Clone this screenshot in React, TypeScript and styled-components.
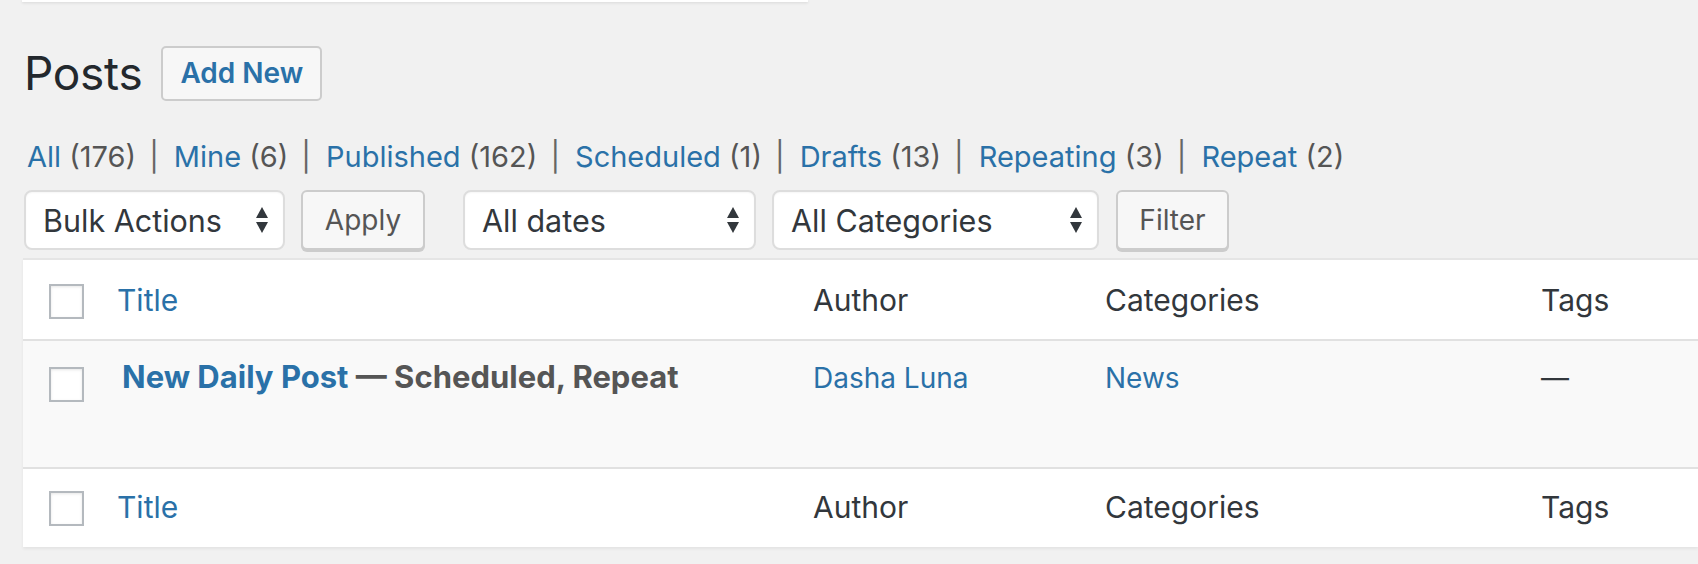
import React from 'react';
import styled, {createGlobalStyle} from 'styled-components';

const GlobalStyle = createGlobalStyle`
    html, body {
        margin: 0;
        padding: 0;
        background: #f1f1f1;
        overflow: hidden;
    }
    body {
        font-family: Inter, "Noto Sans", sans-serif;
        color: #444;
    }
`;

const LINK = '#2a71a8';

const Page = styled.div`
    padding-left: 22px;
    height: 564px;
`;

const TopStrip = styled.div`
    width: 786px;
    height: 2px;
    background: #fff;
    box-shadow: 0 1px 3px rgba(0, 0, 0, 0.12);
`;

const Heading = styled.div`
    display: flex;
    align-items: center;
    gap: 19px;
    margin-top: 42px;
    padding-left: 2px;
`;

const Title = styled.h1`
    margin: 0;
    font-size: 46px;
    font-weight: 400;
    color: #23282d;
    letter-spacing: -0.3px;
    line-height: 58px;
`;

const AddNew = styled.a`
    display: inline-flex;
    align-items: center;
    height: 51px;
    padding: 0 17px;
    border: 2px solid #ccc;
    border-radius: 5px;
    background: #f7f7f7;
    color: ${LINK};
    font-size: 28px;
    font-weight: 600;
    text-decoration: none;
`;

const Views = styled.ul`
    display: flex;
    margin: 38px 0 0 5px;
    padding: 0;
    list-style: none;
    font-size: 29px;
    line-height: 34px;
    color: #555;
`;

const View = styled.li`
    white-space: pre;
`;

const ViewLink = styled.a`
    color: ${LINK};
    text-decoration: none;
`;

const Sep = styled.span`
    margin: 0 15px 0 13px;
    color: #666;
`;

const Tablenav = styled.div`
    display: flex;
    align-items: flex-start;
    margin-top: 16px;
    padding-left: 2px;
    height: 68px;
`;

const Select = styled.div<{$w: number; $gap: number}>`
    box-sizing: border-box;
    display: flex;
    align-items: center;
    justify-content: space-between;
    width: ${p => p.$w}px;
    height: 60px;
    margin-right: ${p => p.$gap}px;
    padding: 0 14px 0 17px;
    background: #fff;
    border: 2px solid #ddd;
    border-radius: 8px;
    box-shadow: inset 0 1px 2px rgba(0, 0, 0, 0.04);
    font-size: 30.5px;
    color: #32373c;
`;

const Button = styled.div<{$w: number; $gap: number}>`
    box-sizing: border-box;
    display: flex;
    align-items: center;
    justify-content: center;
    width: ${p => p.$w}px;
    height: 60px;
    margin-right: ${p => p.$gap}px;
    background: #f7f7f7;
    border: 2px solid #ccc;
    border-radius: 6px;
    box-shadow: 0 2px 0 #ccc;
    font-size: 28px;
    color: #555;
`;

const Arrows = () => (
    <svg width="14" height="28" viewBox="0 0 14 28">
        <path d="M7 1 L13 12 L1 12 Z" fill="#32373c" />
        <path d="M7 27 L13 16 L1 16 Z" fill="#32373c" />
    </svg>
);

const Table = styled.div`
    margin-left: 1px;
    background: #fff;
    border-top: 2px solid #e5e5e5;
    box-shadow: 0 2px 3px rgba(0, 0, 0, 0.06);
`;

const Row = styled.div<{$h: number; $alt?: boolean; $top: number}>`
    display: flex;
    align-items: flex-start;
    height: ${p => p.$h}px;
    padding-top: ${p => p.$top}px;
    box-sizing: border-box;
    background: ${p => (p.$alt ? '#f9f9f9' : '#fff')};
    border-bottom: 2px solid #e1e1e1;
    &:last-child {
        border-bottom: none;
    }
`;

const CheckCell = styled.div`
    width: 94px;
    flex: none;
    padding-left: 26px;
    box-sizing: border-box;
`;

const Checkbox = styled.div`
    width: 35px;
    height: 35px;
    box-sizing: border-box;
    border: 2px solid #b4b9be;
    background: #fff;
    box-shadow: inset 0 1px 3px rgba(0, 0, 0, 0.1);
`;

const Cell = styled.div<{$w?: number; $pad?: number; $size?: number; $shift?: number}>`
    box-sizing: border-box;
    ${p => (p.$w ? `width: ${p.$w}px; flex: none;` : 'flex: 1;')}
    padding-left: ${p => p.$pad || 0}px;
    margin-top: ${p => p.$shift || 0}px;
    font-size: ${p => p.$size || 30}px;
    line-height: 36px;
    color: #32373c;
    white-space: nowrap;
`;

const ColLink = styled.a`
    color: ${LINK};
    text-decoration: none;
`;

const RowTitle = styled.strong`
    font-size: 31px;
    font-weight: 700;
    color: #555;
`;

const views: [string, string][] = [
    ['All', '176'],
    ['Mine', '6'],
    ['Published', '162'],
    ['Scheduled', '1'],
    ['Drafts', '13'],
    ['Repeating', '3'],
    ['Repeat', '2'],
];

const HeaderCells: React.FC = () => (
    <>
        <CheckCell>
            <Checkbox />
        </CheckCell>
        <Cell $w={696} $shift={-2}>
            <ColLink href="#">Title</ColLink>
        </Cell>
        <Cell $w={292} $shift={-2}>Author</Cell>
        <Cell $w={436} $shift={-2}>Categories</Cell>
        <Cell $shift={-2}>Tags</Cell>
    </>
);

const App: React.FC = () => (
    <>
        <GlobalStyle />
        <Page>
            <TopStrip />
            <Heading>
                <Title>Posts</Title>
                <AddNew href="#">Add New</AddNew>
            </Heading>
            <Views>
                {views.map(([name, count], i) => (
                    <View key={name}>
                        <ViewLink href="#">{name}</ViewLink> ({count})
                        {i < views.length - 1 && <Sep>|</Sep>}
                    </View>
                ))}
            </Views>
            <Tablenav>
                <Select $w={261} $gap={16}>
                    <span>Bulk Actions</span>
                    <Arrows />
                </Select>
                <Button $w={124} $gap={38}>Apply</Button>
                <Select $w={293} $gap={16}>
                    <span>All dates</span>
                    <Arrows />
                </Select>
                <Select $w={327} $gap={17}>
                    <span>All Categories</span>
                    <Arrows />
                </Select>
                <Button $w={113} $gap={0}>Filter</Button>
            </Tablenav>
            <Table>
                <Row $h={81} $top={24}>
                    <HeaderCells />
                </Row>
                <Row $h={128} $top={26} $alt>
                    <CheckCell>
                        <Checkbox />
                    </CheckCell>
                    <Cell $w={696} $pad={5} $shift={-8}>
                        <RowTitle>
                            <ColLink href="#">New Daily Post</ColLink> — Scheduled, Repeat
                        </RowTitle>
                    </Cell>
                    <Cell $w={292} $size={28} $shift={-7}>
                        <ColLink href="#">Dasha Luna</ColLink>
                    </Cell>
                    <Cell $w={436} $size={28} $shift={-7}>
                        <ColLink href="#">News</ColLink>
                    </Cell>
                    <Cell $size={28} $shift={-7}>—</Cell>
                </Row>
                <Row $h={78} $top={22}>
                    <HeaderCells />
                </Row>
            </Table>
        </Page>
    </>
);

export default App;
